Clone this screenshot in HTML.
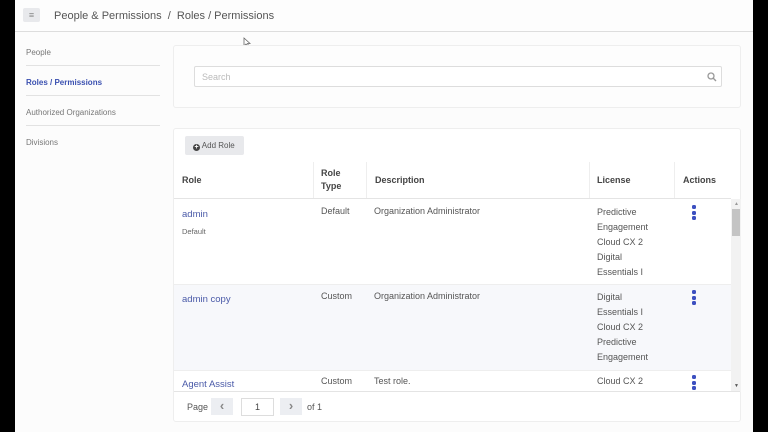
<!DOCTYPE html>
<html><head><style>
*{margin:0;padding:0;box-sizing:border-box}
body{width:768px;height:432px;background:#000;font-family:"Liberation Sans",sans-serif;position:relative;overflow:hidden;color:#444}
#app{position:absolute;left:15px;top:0;width:738px;height:432px;background:#fcfcfc}
.a{position:absolute}
.hdr{left:0;top:0;width:738px;height:32px;border-bottom:1px solid #ddd;background:#fdfdfd}
.menu{left:8px;top:8px;width:17px;height:14px;background:#e8e9ec;border-radius:2px;font-size:9px;color:#888;text-align:center;line-height:14px}
.bc{left:39px;top:10px;font-size:11px;color:#555}
.nav{left:11px;width:134px;font-size:8px;color:#777;border-bottom:1px solid #e2e2e2;height:30px;padding-top:12px}
.panel{background:#fdfdfd;border:1px solid #eee;border-radius:3px}
.t{font-size:9px;color:#555}
.h{font-size:9px;font-weight:bold;color:#444}
.lk{font-size:9.5px;color:#4a5aa8}
.dots{width:4px}
.dots i{display:block;width:4px;height:4px;border-radius:1.5px;background:#3c4fc0;margin-bottom:1.5px}
.pg{width:22px;height:17px;background:#eceef2;font-size:13px;color:#888;text-align:center;line-height:16px;font-weight:bold}
</style></head><body>
<div id="app">
<div class="a hdr"></div>
<div class="a menu">≡</div>
<div class="a bc">People &amp; Permissions&nbsp; /&nbsp; Roles / Permissions</div>
<svg class="a" style="left:228px;top:37px" width="8" height="11" viewBox="0 0 8 11"><path d="M1 1V9L3 7L5 10L6 9.5L4.5 6.5H7Z" fill="#fff" stroke="#666" stroke-width="0.8"/></svg>

<div class="a nav" style="top:36px">People</div>
<div class="a nav" style="top:66px;color:#3a50b0;font-weight:bold">Roles / Permissions</div>
<div class="a nav" style="top:96px">Authorized Organizations</div>
<div class="a nav" style="top:126px;border:none">Divisions</div>

<div class="a panel" style="left:158px;top:45px;width:568px;height:63px"></div>
<div class="a" style="left:179px;top:66px;width:528px;height:21px;border:1px solid #ddd;background:#fff;border-radius:2px"></div>
<div class="a" style="left:187px;top:72px;font-size:9px;color:#bbb">Search</div>
<svg class="a" style="left:692px;top:72px" width="10" height="10" viewBox="0 0 10 10"><circle cx="4" cy="4" r="3" stroke="#999" stroke-width="1.3" fill="none"/><path d="M6.3 6.3L9 9" stroke="#999" stroke-width="1.4"/></svg>

<div class="a panel" style="left:158px;top:128px;width:568px;height:294px;background:#fff"></div>
<div class="a" style="left:170px;top:136px;width:59px;height:19px;background:#e8e9ec;border-radius:2px;font-size:8px;color:#555;line-height:19px;padding-left:8px"><span style="display:inline-block;width:7px;height:7px;border-radius:4px;background:#444;color:#fff;font-size:7px;line-height:7px;text-align:center;vertical-align:-1px;font-weight:bold">+</span> Add Role</div>

<div class="a" style="left:159px;top:198px;width:557px;height:1px;background:#e4e4e4"></div>
<div class="a" style="left:298px;top:162px;width:1px;height:36px;background:#eee"></div>
<div class="a" style="left:351px;top:162px;width:1px;height:36px;background:#eee"></div>
<div class="a" style="left:574px;top:162px;width:1px;height:36px;background:#eee"></div>
<div class="a" style="left:659px;top:162px;width:1px;height:36px;background:#eee"></div>
<div class="a h" style="left:167px;top:175px">Role</div>
<div class="a h" style="left:306px;top:167px;line-height:13px">Role<br>Type</div>
<div class="a h" style="left:360px;top:175px">Description</div>
<div class="a h" style="left:582px;top:175px">License</div>
<div class="a h" style="left:668px;top:175px">Actions</div>

<div class="a" style="left:159px;top:285px;width:557px;height:85px;background:#f7f8fb"></div>
<div class="a" style="left:159px;top:284px;width:557px;height:1px;background:#eee"></div>
<div class="a" style="left:159px;top:370px;width:557px;height:1px;background:#eee"></div>

<div class="a lk" style="left:167px;top:209px">admin</div>
<div class="a" style="left:167px;top:227px;font-size:7.5px;color:#666">Default</div>
<div class="a t" style="left:306px;top:206px">Default</div>
<div class="a t" style="left:359px;top:206px">Organization Administrator</div>
<div class="a t" style="left:582px;top:205px;line-height:15px">Predictive<br>Engagement<br>Cloud CX 2<br>Digital<br>Essentials I</div>
<div class="a dots" style="left:677px;top:205px"><i></i><i></i><i></i></div>

<div class="a lk" style="left:167px;top:294px">admin copy</div>
<div class="a t" style="left:306px;top:291px">Custom</div>
<div class="a t" style="left:359px;top:291px">Organization Administrator</div>
<div class="a t" style="left:582px;top:290px;line-height:15px">Digital<br>Essentials I<br>Cloud CX 2<br>Predictive<br>Engagement</div>
<div class="a dots" style="left:677px;top:290px"><i></i><i></i><i></i></div>

<div class="a lk" style="left:167px;top:379px">Agent Assist</div>
<div class="a t" style="left:306px;top:376px">Custom</div>
<div class="a t" style="left:359px;top:376px">Test role.</div>
<div class="a t" style="left:582px;top:376px">Cloud CX 2</div>
<div class="a dots" style="left:677px;top:375px"><i></i><i></i><i></i></div>

<div class="a" style="left:716px;top:199px;width:10px;height:193px;background:#f2f2f2"></div>
<div class="a" style="left:717px;top:209px;width:8px;height:27px;background:#c4c4c4"></div>
<div class="a" style="left:719px;top:201px;font-size:5px;color:#999">▲</div>
<div class="a" style="left:719px;top:383px;font-size:5px;color:#555">▼</div>

<div class="a" style="left:159px;top:391px;width:566px;height:1px;background:#e4e4e4"></div>
<div class="a t" style="left:172px;top:402px">Page</div>
<div class="a pg" style="left:196px;top:398px">‹</div>
<div class="a" style="left:226px;top:398px;width:33px;height:18px;border:1px solid #ddd;background:#fff;font-size:9px;text-align:center;line-height:16px;color:#444">1</div>
<div class="a pg" style="left:265px;top:398px">›</div>
<div class="a t" style="left:292px;top:402px">of 1</div>
</div>
</body></html>
